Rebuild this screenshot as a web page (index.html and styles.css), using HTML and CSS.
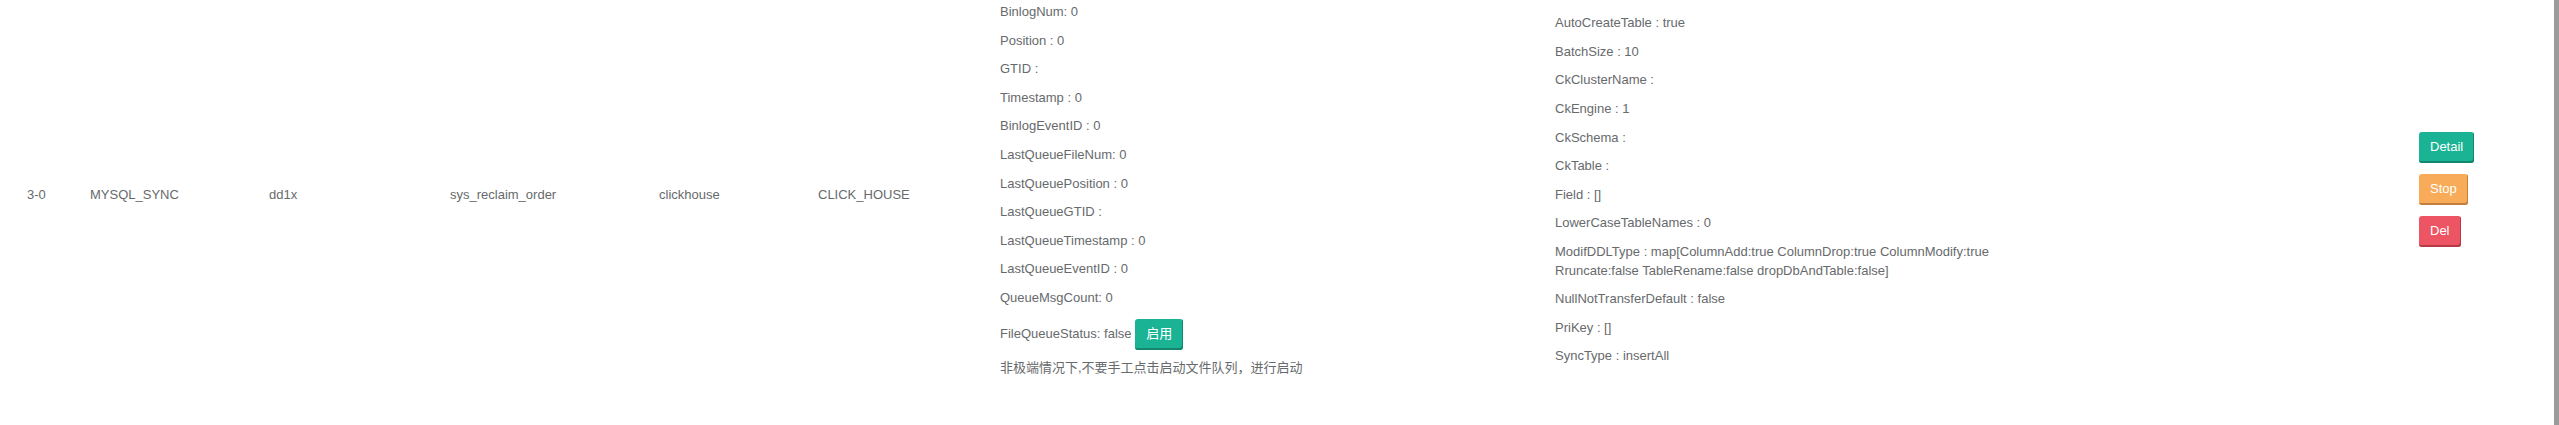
FILE: index.html
```html
<!DOCTYPE html>
<html lang="zh">
<head>
  <meta charset="UTF-8">
  <title>同步任务</title>
  <link rel="stylesheet" href="styles.css">
</head>
<body>
  <div class="page">
    <div class="content">
      <table class="task-table">
        <colgroup>
          <col class="c-id">
          <col class="c-type">
          <col class="c-name">
          <col class="c-table">
          <col class="c-target">
          <col class="c-plugin">
          <col class="c-pos">
          <col class="c-cfg">
          <col class="c-ops">
        </colgroup>
        <tbody>
          <tr>
            <td>3-0</td>
            <td>MYSQL_SYNC</td>
            <td>dd1x</td>
            <td>sys_reclaim_order</td>
            <td>clickhouse</td>
            <td>CLICK_HOUSE</td>
            <td>
              <p>BinlogNum: 0</p>
              <p>Position : 0</p>
              <p>GTID : </p>
              <p>Timestamp : 0</p>
              <p>BinlogEventID : 0</p>
              <p>LastQueueFileNum: 0</p>
              <p>LastQueuePosition : 0</p>
              <p>LastQueueGTID : </p>
              <p>LastQueueTimestamp : 0</p>
              <p>LastQueueEventID : 0</p>
              <p>QueueMsgCount: 0</p>
              <p class="with-btn">FileQueueStatus: false <button class="btn btn-primary">启用</button></p>
              <p>非极端情况下,不要手工点击启动文件队列，进行启动</p>
            </td>
            <td>
              <div class="cfg-list">
                <p>AutoCreateTable : true</p>
                <p>BatchSize : 10</p>
                <p>CkClusterName : </p>
                <p>CkEngine : 1</p>
                <p>CkSchema : </p>
                <p>CkTable : </p>
                <p>Field : []</p>
                <p>LowerCaseTableNames : 0</p>
                <p>ModifDDLType : map[ColumnAdd:true ColumnDrop:true ColumnModify:true Rruncate:false TableRename:false dropDbAndTable:false]</p>
                <p>NullNotTransferDefault : false</p>
                <p>PriKey : []</p>
                <p>SyncType : insertAll</p>
              </div>
            </td>
            <td>
              <div class="ops">
                <button class="btn btn-primary">Detail</button>
                <button class="btn btn-warning">Stop</button>
                <button class="btn btn-danger">Del</button>
              </div>
            </td>
          </tr>
        </tbody>
      </table>
    </div>
    <div class="side-bar"></div>
  </div>
</body>
</html>
```

FILE: styles.css
```css
* {
  box-sizing: border-box;
}

body {
  margin: 0;
  font-family: "Liberation Sans", Arial, "Noto Sans CJK SC", sans-serif;
  font-size: 13px;
  line-height: 18.6px;
  color: #676a6c;
  background-color: #fff;
}

.page {
  display: flex;
  height: 425px;
  overflow: hidden;
}

.content {
  flex: 1;
  padding-left: 19px;
}

.side-bar {
  width: 5px;
  background-color: #9b9b9b;
}

.task-table {
  border-collapse: collapse;
  table-layout: fixed;
  width: 2535px;
}

.c-id { width: 63px; }
.c-type { width: 179px; }
.c-name { width: 181px; }
.c-table { width: 209px; }
.c-target { width: 159px; }
.c-plugin { width: 182px; }
.c-pos { width: 555px; }
.c-cfg { width: 864px; }

.task-table td {
  padding: 3px 8px;
  vertical-align: middle;
}

.task-table p {
  margin: 0 0 10px;
}

.task-table p.with-btn {
  height: 31px;
  line-height: 31px;
}

.cfg-list {
  width: 480px;
}

.ops {
  display: flex;
  flex-direction: column;
  align-items: flex-start;
}

.ops .btn {
  margin-bottom: 11px;
}

.btn {
  display: inline-block;
  font-family: "Liberation Sans", Arial, "Noto Sans CJK SC", sans-serif;
  font-size: 13px;
  line-height: 19px;
  height: 31px;
  padding: 5px 11px 7px;
  color: #fff;
  border: none;
  border-radius: 3px;
  cursor: pointer;
  vertical-align: middle;
}

.btn-primary {
  background-color: #1ab394;
  box-shadow: inset -1px -2px 0 #12866e;
}

.btn-warning {
  background-color: #f8ac59;
  box-shadow: inset -1px -2px 0 #c57e3b;
}

.btn-danger {
  background-color: #ed5565;
  box-shadow: inset -1px -2px 0 #b73a48;
}
```
